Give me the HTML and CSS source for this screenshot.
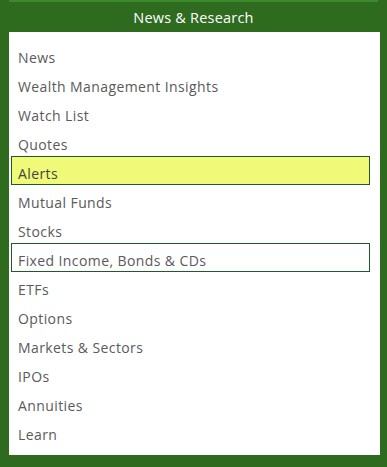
FILE: index.html
```html
<!DOCTYPE html>
<html>
<head>
<meta charset="utf-8">
<link rel="stylesheet" href="styles.css">
</head>
<body>
<div class="frame">
  <div class="strip"></div>
  <div class="header">News &amp; Research</div>
  <div class="panel">
    <ul class="menu">
      <li class="item">News</li>
      <li class="item">Wealth Management Insights</li>
      <li class="item">Watch List</li>
      <li class="item">Quotes</li>
      <li class="item hover">Alerts</li>
      <li class="item">Mutual Funds</li>
      <li class="item">Stocks</li>
      <li class="item focus">Fixed Income, Bonds &amp; CDs</li>
      <li class="item">ETFs</li>
      <li class="item">Options</li>
      <li class="item">Markets &amp; Sectors</li>
      <li class="item">IPOs</li>
      <li class="item">Annuities</li>
      <li class="item">Learn</li>
    </ul>
  </div>
</div>
</body>
</html>
```
FILE: styles.css
```css
html, body {
  margin: 0;
  padding: 0;
  background: #2e6b1f;
}
.frame {
  width: 387px;
  height: 467px;
  background: #2e6b1f;
  font-family: "Open Sans", Lato, sans-serif;
}
.strip {
  height: 2px;
  margin: 0 9px;
  background: #3b8a2b;
}
.header {
  height: 30px;
  box-sizing: border-box;
  padding-top: 6px;
  line-height: 20px;
  text-align: center;
  color: #ffffff;
  font-size: 14.5px;
  letter-spacing: 0.2px;
}
.panel {
  margin-left: 9px;
  width: 371px;
  height: 423px;
  background: #ffffff;
  box-sizing: border-box;
  padding-top: 8px;
}
.menu {
  list-style: none;
  margin: 0;
  padding: 0 10px 0 2px;
}
.item {
  height: 29px;
  box-sizing: border-box;
  padding: 6px 0 0 7px;
  line-height: 23px;
  font-size: 14px;
  letter-spacing: 0.4px;
  color: #5a5a5a;
  white-space: nowrap;
}
.hover {
  background: #f0f978;
  border: 1px solid #1d5a2c;
  padding-left: 6px;
  padding-top: 5px;
  color: #444444;
}
.focus {
  border: 1px solid #1d5a2c;
  padding-left: 6px;
  padding-top: 5px;
}
```
